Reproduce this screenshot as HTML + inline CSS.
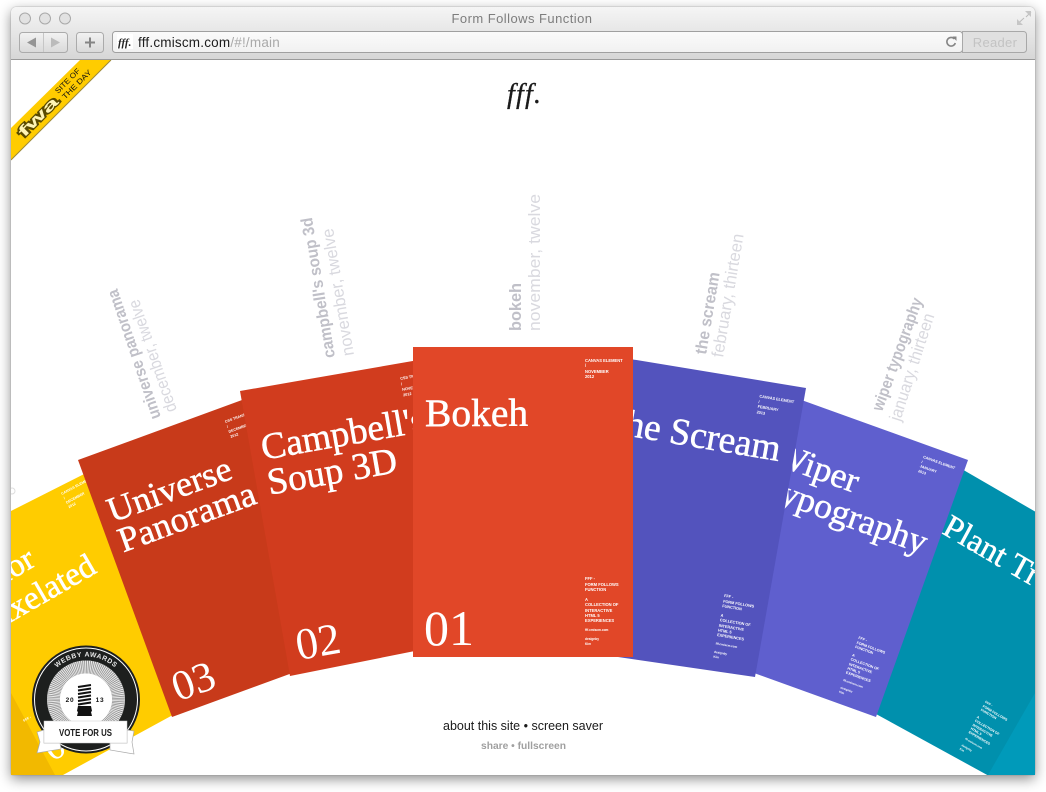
<!DOCTYPE html>
<html><head><meta charset="utf-8"><title>Form Follows Function</title>
<style>
html,body{margin:0;padding:0;background:#fff;width:1046px;height:792px;overflow:hidden}
#win{position:absolute;left:11px;top:7px;width:1024px;height:768px;border-radius:5px 5px 2px 2px;box-shadow:0 0 1px #777,0 4px 13px rgba(0,0,0,.45);background:#fff}
svg{position:absolute;left:0;top:0}
text{font-family:"Liberation Sans",sans-serif}
.s{font-family:"Liberation Serif",serif;fill:#fff}
.t{stroke:#fff;stroke-width:.55px}
.m{font-size:4.1px;font-weight:bold;fill:#fff}
.x{font-size:3.2px}
.lb{font-size:16.5px;font-weight:bold;fill:#c0c0c8}
.ln{font-size:17px;fill:#d9d9df}
</style></head><body>
<div id="win"></div>
<svg width="1046" height="792" viewBox="0 0 1046 792" xmlns="http://www.w3.org/2000/svg">
<defs>
<linearGradient id="tb" x1="0" y1="0" x2="0" y2="1"><stop offset="0" stop-color="#f5f5f5"/><stop offset="1" stop-color="#d6d6d6"/></linearGradient>
<linearGradient id="btn" x1="0" y1="0" x2="0" y2="1"><stop offset="0" stop-color="#f2f2f2"/><stop offset="1" stop-color="#d9d9d9"/></linearGradient>
<linearGradient id="url" x1="0" y1="0" x2="0" y2="1"><stop offset="0" stop-color="#fbfbfb"/><stop offset="1" stop-color="#f1f1f1"/></linearGradient>
<clipPath id="pg"><rect x="11" y="60" width="1024" height="715"/></clipPath>
<clipPath id="cc3"><polygon points="78,460 264,392 358,649 172,717"/></clipPath>
<clipPath id="cc2"><polygon points="240,391 430,358 470,640 290,676"/></clipPath>
<clipPath id="cc1"><polygon points="600,354 806,388 755,677 570,650"/></clipPath>
<clipPath id="cc4"><polygon points="782,393 968,460 876,717 690,650"/></clipPath>
<path id="arc" d="M 43 699.500 A 43 43 0 0 1 129 699.500"/>
</defs>

<!-- browser chrome -->
<path d="M11 60V12a5 5 0 0 1 5-5H1030a5 5 0 0 1 5 5V60z" fill="url(#tb)"/>
<rect x="11" y="59" width="1024" height="1" fill="#9a9a9a"/>
<g fill="#e2e2e2" stroke="#a9a9a9" stroke-width="1">
<circle cx="25" cy="18.500" r="5.500"/><circle cx="45" cy="18.500" r="5.500"/><circle cx="65" cy="18.500" r="5.500"/>
</g>
<text x="522" y="23" text-anchor="middle" font-size="13" fill="#7d7d7d" letter-spacing=".45">Form Follows Function</text>
<g fill="none" stroke="#bbb" stroke-width="1"><path d="M1018 23.500 1024 18M1026 17 1031 12"/></g>
<polygon points="1017,25 1017,19 1023,25" fill="#c6c6c6"/><polygon points="1031,11 1025,11 1031,17" fill="#c6c6c6"/>

<rect x="19.500" y="32.500" width="48" height="20" rx="3" fill="url(#btn)" stroke="#ababab"/>
<line x1="43.500" y1="33" x2="43.500" y2="52" stroke="#c6c6c6"/>
<polygon points="27,42.500 36,37.500 36,47.500" fill="#959595"/>
<polygon points="60,42.500 51,37.500 51,47.500" fill="#bbb"/>
<rect x="76.500" y="32.500" width="27" height="20" rx="3" fill="url(#btn)" stroke="#ababab"/>
<path d="M90 37.500v10M85 42.500h10" stroke="#858585" stroke-width="2"/>
<rect x="112.500" y="31.500" width="850" height="21" rx="3" fill="url(#url)" stroke="#a0a0a0"/>
<rect x="117" y="34" width="16" height="15" fill="#fff"/>
<text x="118" y="46" font-size="11" font-weight="bold" font-style="italic" style="font-family:'Liberation Serif',serif" fill="#222">fff.</text>
<text x="138" y="47" font-size="13.500" fill="#1c1c1c" letter-spacing=".2">fff.cmiscm.com<tspan fill="#a9a9a9">/#!/main</tspan></text>
<path d="M954.500 39a4.300 4.300 0 1 0 .8 4" fill="none" stroke="#858585" stroke-width="1.600"/>
<polygon points="952.500,36.500 956.500,36.500 956.500,41" fill="#858585"/>
<path d="M962.500 31.500h61a3 3 0 0 1 3 3v15a3 3 0 0 1-3 3h-61z" fill="#e0e0e0" stroke="#a8a8a8"/>
<text x="995" y="47" text-anchor="middle" font-size="13" fill="#c3c3c3" letter-spacing=".3">Reader</text>

<!-- page -->
<rect x="11" y="60" width="1024" height="715" fill="#fff"/>
<g clip-path="url(#pg)">
<text x="524" y="103" text-anchor="middle" font-size="28" font-style="italic" style="font-family:'Liberation Serif',serif;stroke:#1a1a1a;stroke-width:.3px" fill="#1a1a1a" textLength="34" lengthAdjust="spacing">fff.</text>

<!-- labels -->
<g transform="translate(161,417) rotate(-108.800)"><text class="lb" textLength="136" lengthAdjust="spacingAndGlyphs">universe panorama</text></g>
<g transform="translate(177,410) rotate(-109)"><text class="ln" textLength="118" lengthAdjust="spacingAndGlyphs">december, twelve</text></g>
<g transform="translate(335,357) rotate(-99.400)"><text class="lb" textLength="142" lengthAdjust="spacingAndGlyphs">campbell's soup 3d</text></g>
<g transform="translate(354,355) rotate(-99.400)"><text class="ln" textLength="129" lengthAdjust="spacingAndGlyphs">november, twelve</text></g>
<g transform="translate(521,331) rotate(-90)"><text class="lb" textLength="48" lengthAdjust="spacingAndGlyphs">bokeh</text></g>
<g transform="translate(540,331) rotate(-90)"><text class="ln" textLength="137" lengthAdjust="spacingAndGlyphs">november, twelve</text></g>
<g transform="translate(706,355) rotate(-80.500)"><text class="lb" textLength="83" lengthAdjust="spacingAndGlyphs">the scream</text></g>
<g transform="translate(723,358) rotate(-80.500)"><text class="ln" textLength="125" lengthAdjust="spacingAndGlyphs">february, thirteen</text></g>
<g transform="translate(882,412) rotate(-70)"><text class="lb" textLength="119" lengthAdjust="spacingAndGlyphs">wiper typography</text></g>
<g transform="translate(900,422) rotate(-72)"><text class="ln" textLength="112" lengthAdjust="spacingAndGlyphs">january, thirteen</text></g>

<!-- left yellow -->
<polygon points="11,511 100,466 200,700 171,716 63,775 11,775" fill="#ffcc00"/>
<polygon points="11,693 55,775 11,775" fill="#f2b900"/>
<circle cx="12" cy="491" r="3" fill="none" stroke="#ddd"/>
<g transform="translate(98,572) rotate(-30)"><text class="s t" font-size="33" text-anchor="end">Pixelated</text></g>
<g transform="translate(37,565) rotate(-30)"><text class="s t" font-size="33" text-anchor="end">Color</text></g>
<g transform="translate(62,495) rotate(-28)"><text class="m" style="font-size:3.600px">CANVAS ELEMENT</text><text class="m" y="5" style="font-size:3.600px">/</text><text class="m" y="10" style="font-size:3.600px">DECEMBER</text><text class="m" y="15" style="font-size:3.600px">2012</text></g>
<g transform="translate(52,762) rotate(-30)"><text class="s" font-size="38">0</text></g>
<g transform="translate(24,722) rotate(-30)"><text class="m" style="font-size:3.500px">FFF -</text></g>

<!-- right teal -->
<polygon points="960,468 1060,526 1060,804 1000,782 876,714 780,660" fill="#0090ad"/>
<polygon points="988,775 1035,693 1035,775" fill="#009aba"/>
<g transform="translate(3,3)"><g transform="matrix(.72 .42 -.39 .72 960 468)">
<text class="s t" font-size="40" x="12" y="79">Plant Tree</text>
</g></g>
<g transform="translate(-9,-4)"><g transform="matrix(.72 .42 -.39 .72 960 468)">
<g><text class="m" x="172" y="231">FFF -</text><text class="m" x="172" y="237">FORM FOLLOWS</text><text class="m" x="172" y="242">FUNCTION</text><text class="m" x="172" y="252">A</text><text class="m" x="172" y="257">COLLECTION OF</text><text class="m" x="172" y="263">INTERACTIVE</text><text class="m" x="172" y="268">HTML 5</text><text class="m" x="172" y="273">EXPERIENCES</text><text class="m x" x="172" y="282">fff.cmiscm.com</text><text class="m x" x="172" y="291">designby</text><text class="m x" x="172" y="296">Kim</text></g>
</g></g>

<!-- 03 Universe -->
<polygon points="78,460 264,392 358,649 172,717" fill="#c83a1a"/>
<g clip-path="url(#cc3)"><g transform="matrix(.845 -.309 .303 .829 78 460)">
<text class="s t" font-size="40" x="12" y="80">Universe</text>
<text class="s t" font-size="40" x="12" y="116">Panorama</text>
<text class="s" font-size="48" x="12" y="296">03</text>
<text class="m" x="168" y="18">CSS TRANSFORM</text><text class="m" x="168" y="24">/</text><text class="m" x="168" y="30">DECEMBER</text><text class="m" x="168" y="36">2012</text>
</g></g>

<!-- 02 Campbell -->
<polygon points="240,391 430,358 470,640 290,676" fill="#d13c1e"/>
<g clip-path="url(#cc2)"><g transform="matrix(.916 -.161 .161 .919 240 391)">
<text class="s t" font-size="40" x="12" y="77">Campbell's</text>
<text class="s t" font-size="40" x="12" y="115">Soup 3D</text>
<text class="s" font-size="48" x="12" y="295">02</text>
<text class="m" x="172" y="18">CSS TRANSFORM</text><text class="m" x="172" y="24">/</text><text class="m" x="172" y="30">NOVEMBER</text><text class="m" x="172" y="36">2012</text>
</g></g>

<!-- 05 Wiper behind scream -->
<polygon points="782,393 968,460 876,717 690,650" fill="#5f5fce"/>
<g clip-path="url(#cc4)"><g transform="matrix(.845 .305 -.297 .829 782 393)">
<text class="s t" font-size="40" x="15" y="79">Wiper</text>
<text class="s t" font-size="40" x="15" y="118">Typography</text>
<g><text class="m" x="172" y="15">CANVAS ELEMENT</text><text class="m" x="172" y="21">/</text><text class="m" x="172" y="26">JANUARY</text><text class="m" x="172" y="32">2013</text>
<text class="m" x="172" y="233">FFF -</text><text class="m" x="172" y="239">FORM FOLLOWS</text><text class="m" x="172" y="244">FUNCTION</text><text class="m" x="172" y="254">A</text><text class="m" x="172" y="259">COLLECTION OF</text><text class="m" x="172" y="265">INTERACTIVE</text><text class="m" x="172" y="270">HTML 5</text><text class="m" x="172" y="275">EXPERIENCES</text><text class="m x" x="172" y="284">fff.cmiscm.com</text><text class="m x" x="172" y="293">designby</text><text class="m x" x="172" y="298">Kim</text></g>
</g></g>

<!-- 04 Scream -->
<polygon points="600,354 806,388 755,677 570,650" fill="#5353bd"/>
<g clip-path="url(#cc1)"><g transform="matrix(.92 .155 -.165 .932 604 354)">
<text class="s t" font-size="40" x="12" y="81">The Scream</text>
<text class="m" x="172" y="18">CANVAS ELEMENT</text><text class="m" x="172" y="24">/</text><text class="m" x="172" y="29">FEBRUARY</text><text class="m" x="172" y="35">2013</text>
<text class="m" x="172" y="232">FFF -</text><text class="m" x="172" y="238">FORM FOLLOWS</text><text class="m" x="172" y="243">FUNCTION</text><text class="m" x="172" y="253">A</text><text class="m" x="172" y="258">COLLECTION OF</text><text class="m" x="172" y="264">INTERACTIVE</text><text class="m" x="172" y="269">HTML 5</text><text class="m" x="172" y="274">EXPERIENCES</text><text class="m x" x="172" y="283">fff.cmiscm.com</text><text class="m x" x="172" y="292">designby</text><text class="m x" x="172" y="297">Kim</text>
</g></g>

<!-- 01 Bokeh -->
<rect x="413" y="347" width="220" height="310" fill="#e14728"/>
<g transform="translate(413,347)">
<text class="s t" font-size="39.500" x="12" y="79">Bokeh</text>
<text class="s" font-size="50" x="11" y="298">01</text>
<text class="m" x="172" y="15">CANVAS ELEMENT</text><text class="m" x="172" y="20">/</text><text class="m" x="172" y="26">NOVEMBER</text><text class="m" x="172" y="31">2012</text>
<text class="m" x="172" y="233">FFF -</text><text class="m" x="172" y="239">FORM FOLLOWS</text><text class="m" x="172" y="244">FUNCTION</text><text class="m" x="172" y="254">A</text><text class="m" x="172" y="259">COLLECTION OF</text><text class="m" x="172" y="265">INTERACTIVE</text><text class="m" x="172" y="270">HTML 5</text><text class="m" x="172" y="275">EXPERIENCES</text><text class="m x" x="172" y="284">fff.cmiscm.com</text><text class="m x" x="172" y="293">designby</text><text class="m x" x="172" y="298">Kim</text>
</g>

<!-- footer links -->
<text x="523" y="730" text-anchor="middle" font-size="13" fill="#1a1a1a" textLength="160" lengthAdjust="spacingAndGlyphs">about this site • screen saver</text>
<text x="523.500" y="749" text-anchor="middle" font-size="10.500" font-weight="bold" fill="#a0a0a0" textLength="85" lengthAdjust="spacingAndGlyphs">share • fullscreen</text>

<!-- FWA ribbon -->
<polygon points="80,60 111,60 11,160 11,128" fill="#ffcc00"/>
<line x1="111" y1="60" x2="11" y2="160" stroke="#9c8a3a" stroke-width="1"/>
<g transform="translate(24,138) rotate(-45)">
<text x="0" y="0" font-size="15" font-weight="bold" fill="#fff4b4" stroke="#5a4a00" stroke-width="2.500" paint-order="stroke" textLength="50" lengthAdjust="spacingAndGlyphs">fwa</text>
</g>
<g transform="translate(58,94) rotate(-45)" fill="#111">
<text x="0" y="0" font-size="7.500" textLength="32" lengthAdjust="spacingAndGlyphs">SITE OF</text>
<text x="1" y="9" font-size="7.500" textLength="38" lengthAdjust="spacingAndGlyphs">THE DAY</text>
</g>

<!-- Webby badge -->
<circle cx="86" cy="699.500" r="54" fill="#1d1f1e"/>
<circle cx="86" cy="699.500" r="51.500" fill="none" stroke="#fff" stroke-width="1"/>
<circle cx="86" cy="699.500" r="39" fill="#eee"/>
<circle cx="86" cy="699.500" r="32.500" fill="none" stroke="#8f8f8f" stroke-width="13" stroke-dasharray=".8 .9"/>
<circle cx="86" cy="699.500" r="26" fill="#fff"/>
<text font-size="6.800" font-weight="bold" fill="#e8e8e8" letter-spacing=".6"><textPath href="#arc" startOffset="50%" text-anchor="middle">WEBBY AWARDS</textPath></text>
<text x="70" y="702" text-anchor="middle" font-size="6.500" font-weight="bold" fill="#111" letter-spacing=".8">20</text>
<text x="100" y="702" text-anchor="middle" font-size="6.500" font-weight="bold" fill="#111" letter-spacing=".8">13</text>
<g fill="none" stroke="#111" stroke-width="2">
<path d="M78 687l13-2M78 690.500l13-2M78 694l13-2M78 697.500l13-2M78 701l13-2M78 704.500l13-2"/>
</g>
<path d="M78 706h13l1 5-1 1 1 4h-15l1-4-1-1z" fill="#111"/>
<polygon points="37,732 40,742 37,753 61,749 60,743 44,743 44,730" fill="#fff" stroke="#aaa" stroke-width=".7"/>
<polygon points="134,731 132,742 134,754 110,750 110,743 127,743 127,730" fill="#fff" stroke="#aaa" stroke-width=".7"/>
<rect x="44" y="721" width="83" height="22" fill="#fff" stroke="#ccc" stroke-width=".5"/>
<text x="85.500" y="736" text-anchor="middle" font-size="10.500" font-weight="bold" fill="#1a1a1a" textLength="53" lengthAdjust="spacingAndGlyphs">VOTE FOR US</text>
</g>
</svg>
</body></html>
